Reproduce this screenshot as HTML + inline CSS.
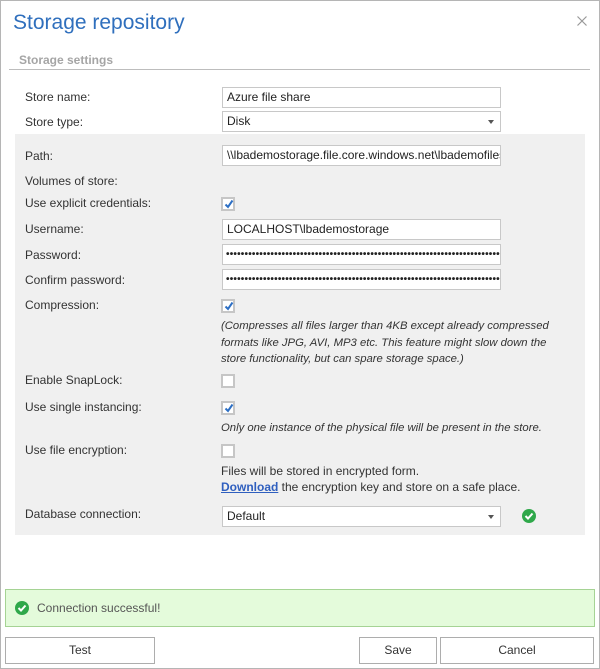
<!DOCTYPE html>
<html><head><meta charset="utf-8"><style>
*{box-sizing:border-box;margin:0;padding:0}
body{width:600px;height:669px;background:#fff;font-family:"Liberation Sans",sans-serif;font-size:12px;color:#333;position:relative;overflow:hidden}
.frame{position:absolute;left:0;top:0;width:600px;height:669px;border:1px solid #b5b5b5}
.a{position:absolute;white-space:nowrap;line-height:16px}
.in{position:absolute;left:222px;width:279px;height:21px;background:#fff;border:1px solid #c8c8c8;line-height:19px;padding-left:4px;font-size:12px;color:#222;overflow:hidden;white-space:nowrap}
.dd::after{content:"";position:absolute;right:6px;top:8px;border-left:3.5px solid transparent;border-right:3.5px solid transparent;border-top:4px solid #555}
.cb{position:absolute;left:221px;width:14px;height:14px;background:#fff;border:2px solid #c6c6c6}
.cb svg{position:absolute;left:1px;top:0px}
.it{font-style:italic;line-height:16.5px;font-size:11.3px}
.pw{letter-spacing:0.2px;font-size:10px;font-weight:bold;padding-left:3px}
.btn{position:absolute;top:637px;height:27px;border:1px solid #adadad;background:#fff;text-align:center;line-height:25px;font-size:12px;color:#333}
</style></head><body>
<div class="frame"></div>
<div class="a" style="left:13px;top:10px;font-size:21px;line-height:26px;color:#2f6fbd">Storage repository</div>
<svg style="position:absolute;left:577px;top:16px" width="10" height="10"><path d="M0.5 0.5 L9.5 9.5 M9.5 0.5 L0.5 9.5" stroke="#999" stroke-width="1.2"/></svg>
<div class="a" style="left:19px;top:52px;font-weight:bold;color:#a5a5a5;font-size:12px">Storage settings</div>
<div style="position:absolute;left:9px;top:69px;width:581px;height:1px;background:#bdbdbd"></div>
<div style="position:absolute;left:15px;top:134px;width:570px;height:401px;background:#f0f0f0"></div>

<div class="a" style="left:25px;top:89px">Store name:</div>
<div class="a" style="left:25px;top:114px">Store type:</div>
<div class="a" style="left:25px;top:148px">Path:</div>
<div class="a" style="left:25px;top:173px">Volumes of store:</div>
<div class="a" style="left:25px;top:195px">Use explicit credentials:</div>
<div class="a" style="left:25px;top:221px">Username:</div>
<div class="a" style="left:25px;top:247px">Password:</div>
<div class="a" style="left:25px;top:272px">Confirm password:</div>
<div class="a" style="left:25px;top:297px">Compression:</div>
<div class="a" style="left:25px;top:372px">Enable SnapLock:</div>
<div class="a" style="left:25px;top:399px">Use single instancing:</div>
<div class="a" style="left:25px;top:442px">Use file encryption:</div>
<div class="a" style="left:25px;top:506px">Database connection:</div>

<div class="in" style="top:87px">Azure file share</div>
<div class="in dd" style="top:111px">Disk</div>
<div class="in" style="top:145px">\\lbademostorage.file.core.windows.net\lbademofileshare</div>
<div class="cb" style="top:197px"><svg width="10" height="10"><path d="M1.5 5.5 L4 8 L8.5 1.5" stroke="#2d6fc4" stroke-width="2" fill="none"/></svg></div>
<div class="in" style="top:219px">LOCALHOST\lbademostorage</div>
<div class="in pw" style="top:244px">••••••••••••••••••••••••••••••••••••••••••••••••••••••••••••••••••••••••••••••••••••••••••</div>
<div class="in pw" style="top:269px">••••••••••••••••••••••••••••••••••••••••••••••••••••••••••••••••••••••••••••••••••••••••••</div>
<div class="cb" style="top:299px"><svg width="10" height="10"><path d="M1.5 5.5 L4 8 L8.5 1.5" stroke="#2d6fc4" stroke-width="2" fill="none"/></svg></div>
<div class="a it" style="left:221px;top:318px">(Compresses all files larger than 4KB except already compressed<br>formats like JPG, AVI, MP3 etc. This feature might slow down the<br>store functionality, but can spare storage space.)</div>
<div class="cb" style="top:374px"></div>
<div class="cb" style="top:401px"><svg width="10" height="10"><path d="M1.5 5.5 L4 8 L8.5 1.5" stroke="#2d6fc4" stroke-width="2" fill="none"/></svg></div>
<div class="a it" style="left:221px;top:420px">Only one instance of the physical file will be present in the store.</div>
<div class="cb" style="top:444px"></div>
<div class="a" style="left:221px;top:463px">Files will be stored in encrypted form.</div>
<div class="a" style="left:221px;top:479px"><span style="color:#2f5fbf;text-decoration:underline;font-weight:bold">Download</span> the encryption key and store on a safe place.</div>
<div class="in dd" style="top:506px">Default</div>
<svg style="position:absolute;left:522px;top:509px" width="14" height="14"><circle cx="7" cy="7" r="7" fill="#2fa84a"/><path d="M3.5 7 L6 9.5 L10.5 4.5" stroke="#fff" stroke-width="2" fill="none"/></svg>

<div style="position:absolute;left:5px;top:589px;width:590px;height:38px;background:#e4fbdb;border:1px solid #a5d394"></div>
<svg style="position:absolute;left:15px;top:601px" width="14" height="14"><circle cx="7" cy="7" r="7" fill="#2fa84a"/><path d="M3.5 7 L6 9.5 L10.5 4.5" stroke="#fff" stroke-width="2" fill="none"/></svg>
<div class="a" style="left:37px;top:600px;color:#555">Connection successful!</div>

<div class="btn" style="left:5px;width:150px">Test</div>
<div class="btn" style="left:359px;width:78px">Save</div>
<div class="btn" style="left:440px;width:154px">Cancel</div>
</body></html>
